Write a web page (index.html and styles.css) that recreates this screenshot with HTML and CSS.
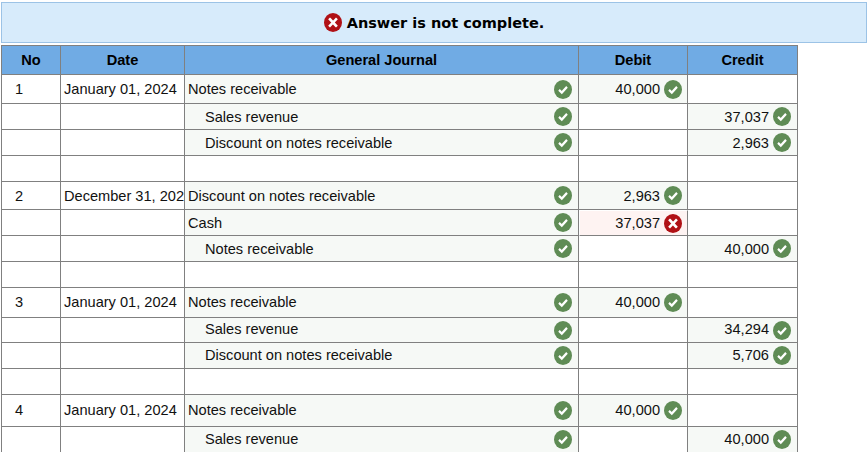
FILE: index.html
```html
<!doctype html>
<html lang="en">
  <head>
    <meta name="viewport" content="width=device-width, user-scalable=no">
    <title>Answer is not complete</title>

    <link rel="stylesheet" href="styles.css">
  </head>
  <body>
    <svg class="defs" width="0" height="0">
      <symbol id="ok" viewBox="0 0 18 18" preserveAspectRatio="none">
        <circle cx="9" cy="9" r="9" fill="#5f8c55"/>
        <path d="M5 9.3l2.8 2.6L13 6.5" fill="none" stroke="#fff" stroke-width="2.2"/>
      </symbol>
      <symbol id="bad" viewBox="0 0 18 18" preserveAspectRatio="none">
        <circle cx="9" cy="9" r="9" fill="#b01116"/>
        <path d="M6 6l6 6M12 6l-6 6" fill="none" stroke="#fff" stroke-width="2.6" stroke-linecap="square"/>
      </symbol>
    </svg>

    <div class="banner">
      <svg class="icon"><use href="#bad"/></svg>
      <span>Answer is not complete.</span>
    </div>

    <table class="journal">
      <colgroup>
        <col class="c-no"><col class="c-date"><col class="c-acct"><col class="c-debit"><col class="c-credit">
      </colgroup>
      <thead>
        <tr class="h30"><th>No</th><th>Date</th><th>General Journal</th><th>Debit</th><th>Credit</th></tr>
      </thead>
      <tbody>
        <tr class="h29">
          <td class="no">1</td><td class="date">January 01, 2024</td>
          <td class="acct"><div class="cell"><span>Notes receivable</span><svg class="icon"><use href="#ok"/></svg></div></td>
          <td class="amt"><div class="cell"><span>40,000</span><svg class="icon"><use href="#ok"/></svg></div></td>
          <td></td>
        </tr>
        <tr class="h26">
          <td></td><td></td>
          <td class="acct"><div class="cell sub"><span>Sales revenue</span><svg class="icon"><use href="#ok"/></svg></div></td>
          <td></td>
          <td class="amt"><div class="cell"><span>37,037</span><svg class="icon"><use href="#ok"/></svg></div></td>
        </tr>
        <tr class="h26">
          <td></td><td></td>
          <td class="acct"><div class="cell sub"><span>Discount on notes receivable</span><svg class="icon"><use href="#ok"/></svg></div></td>
          <td></td>
          <td class="amt"><div class="cell"><span>2,963</span><svg class="icon"><use href="#ok"/></svg></div></td>
        </tr>
        <tr class="h26"><td></td><td></td><td></td><td></td><td></td></tr>

        <tr class="h28">
          <td class="no">2</td><td class="date">December 31, 2024</td>
          <td class="acct"><div class="cell"><span>Discount on notes receivable</span><svg class="icon"><use href="#ok"/></svg></div></td>
          <td class="amt"><div class="cell"><span>2,963</span><svg class="icon"><use href="#ok"/></svg></div></td>
          <td></td>
        </tr>
        <tr class="h26">
          <td></td><td></td>
          <td class="acct"><div class="cell"><span>Cash</span><svg class="icon"><use href="#ok"/></svg></div></td>
          <td class="amt wrong"><div class="cell"><span>37,037</span><svg class="icon"><use href="#bad"/></svg></div></td>
          <td></td>
        </tr>
        <tr class="h26">
          <td></td><td></td>
          <td class="acct"><div class="cell sub"><span>Notes receivable</span><svg class="icon"><use href="#ok"/></svg></div></td>
          <td></td>
          <td class="amt"><div class="cell"><span>40,000</span><svg class="icon"><use href="#ok"/></svg></div></td>
        </tr>
        <tr class="h26"><td></td><td></td><td></td><td></td><td></td></tr>

        <tr class="h30 up">
          <td class="no">3</td><td class="date">January 01, 2024</td>
          <td class="acct"><div class="cell"><span>Notes receivable</span><svg class="icon"><use href="#ok"/></svg></div></td>
          <td class="amt"><div class="cell"><span>40,000</span><svg class="icon"><use href="#ok"/></svg></div></td>
          <td></td>
        </tr>
        <tr class="h25 up">
          <td></td><td></td>
          <td class="acct"><div class="cell sub"><span>Sales revenue</span><svg class="icon"><use href="#ok"/></svg></div></td>
          <td></td>
          <td class="amt"><div class="cell"><span>34,294</span><svg class="icon"><use href="#ok"/></svg></div></td>
        </tr>
        <tr class="h26 up">
          <td></td><td></td>
          <td class="acct"><div class="cell sub"><span>Discount on notes receivable</span><svg class="icon"><use href="#ok"/></svg></div></td>
          <td></td>
          <td class="amt"><div class="cell"><span>5,706</span><svg class="icon"><use href="#ok"/></svg></div></td>
        </tr>
        <tr class="h26"><td></td><td></td><td></td><td></td><td></td></tr>

        <tr class="h32 up">
          <td class="no">4</td><td class="date">January 01, 2024</td>
          <td class="acct"><div class="cell"><span>Notes receivable</span><svg class="icon"><use href="#ok"/></svg></div></td>
          <td class="amt"><div class="cell"><span>40,000</span><svg class="icon"><use href="#ok"/></svg></div></td>
          <td></td>
        </tr>
        <tr class="h26 up">
          <td></td><td></td>
          <td class="acct"><div class="cell sub"><span>Sales revenue</span><svg class="icon"><use href="#ok"/></svg></div></td>
          <td></td>
          <td class="amt"><div class="cell"><span>40,000</span><svg class="icon"><use href="#ok"/></svg></div></td>
        </tr>
      </tbody>
    </table>
  </body>
</html>
```

FILE: styles.css
```css
* { box-sizing: border-box; }

html {
  overflow: hidden;
  height: 100%;
  font-size: 14.6px;
  font-family: "Liberation Sans", Arial, sans-serif;
  color: #111;
}

body {
  margin: 0;
  background: #fff;
}

.defs {
  display: block;
  height: 0;
}

.icon {
  display: block;
  flex: none;
  width: 18px;
  height: 19px;
}

.banner {
  display: flex;
  align-items: center;
  justify-content: center;
  gap: 5px;
  height: 41px;
  margin: 2px 0 2px 1px;
  background: #d7ebfb;
  border: 1px solid #9cc3e6;
  font-family: "DejaVu Sans", Verdana, sans-serif;
  font-size: 14.5px;
  font-weight: bold;
  color: #000;
}

.journal {
  table-layout: fixed;
  border-collapse: separate;
  border-spacing: 0;
  width: 797px;
  margin-left: 1px;
}

.c-no { width: 60px; }
.c-date { width: 124px; }
.c-acct { width: 394px; }
.c-debit { width: 109px; }
.c-credit { width: 110px; }

th, td {
  padding: 0;
  border-right: 1px solid #808080;
  border-bottom: 1px solid #808080;
  overflow: hidden;
  white-space: nowrap;
}

th:first-child, td:first-child {
  border-left: 1px solid #808080;
}

th {
  border-top: 1px solid #808080;
  background: #70abe4;
  color: #000;
  font-weight: bold;
  text-align: center;
}

.h25 { height: 25px; }
.h26 { height: 26px; }
.h28 { height: 28px; }
.h29 { height: 29px; }
.h30 { height: 30px; }
.h32 { height: 32px; }

.no {
  text-align: left;
  padding-left: 13px;
}

.date {
  padding-left: 3px;
}

.acct, .amt {
  background: #f6f9f6;
}

.cell {
  display: flex;
  align-items: center;
  justify-content: space-between;
  padding: 0 6px 0 3px;
}

.sub {
  padding-left: 20px;
}

.amt .cell {
  justify-content: flex-end;
  gap: 4px;
}

td:nth-child(4) .cell {
  padding-right: 5px;
}

/* lower entries sit a pixel higher in their rows */
.up .no, .up .date, .up .cell span {
  padding-bottom: 2px;
}

.wrong {
  background: #fef3f2;
  border-top: 1px solid #fff;
  border-left: 1px solid #fff;
}
```
